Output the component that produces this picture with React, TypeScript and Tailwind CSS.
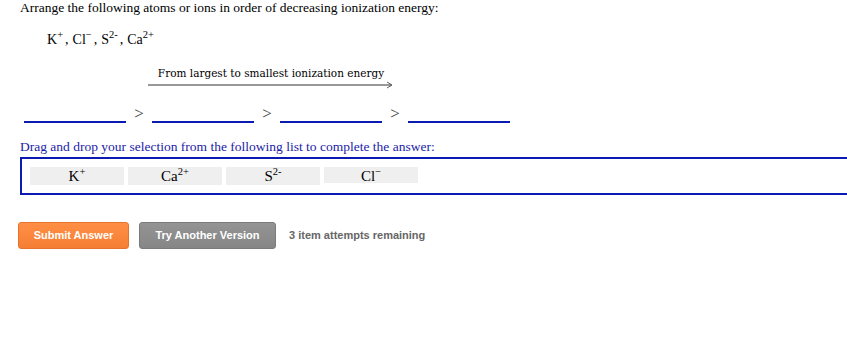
import React from 'react';

const serif = { fontFamily: '"Liberation Serif", "Times New Roman", serif' };
const math = { fontFamily: '"DejaVu Serif", "Liberation Serif", serif' };
const sans = { fontFamily: '"Liberation Sans", Arial, sans-serif' };

const tiles = [
    { base: 'K', sup: '+' },
    { base: 'Ca', sup: '2+' },
    { base: 'S', sup: '2-' },
    { base: 'Cl', sup: '−' },
];

const Sup = ({ children }: { children: React.ReactNode }) => (
    <span className="relative -top-[6px] text-[10.5px]">{children}</span>
);

const Comma = () => <span className="ml-[2px] mr-[4px]">,</span>;

const Blank = () => <div className="w-[102px] h-[2px] bg-[#0a1ab3] mt-[15px]" />;

const Gt = () => (
    <span className="text-[17px] text-[#444] w-[26px] text-center leading-[15px]" style={serif}>
        &gt;
    </span>
);

const App: React.FC = () => {
    return (
        <div className="w-[847px] h-[363px] bg-white overflow-hidden relative">
            <div className="pl-[20px]">
                {/* Question */}
                <p className="text-[13.5px] text-black leading-[16px]" style={serif}>
                    Arrange the following atoms or ions in order of decreasing ionization energy:
                </p>
                <p className="mt-[15px] ml-[27px] text-[14px] text-black leading-[18px]" style={serif}>
                    K<Sup>+</Sup><Comma />Cl<Sup>−</Sup><Comma />S<Sup>2-</Sup><Comma />Ca<Sup>2+</Sup>
                </p>

                {/* Arrow label */}
                <div className="ml-[128px] mt-[16px] w-[246px] flex flex-col items-center">
                    <span className="text-[10.5px] text-black leading-[14px]" style={math}>
                        From largest to smallest ionization energy
                    </span>
                    <svg width="246" height="8" className="mt-[1px]">
                        <line x1="0" y1="4" x2="243" y2="4" stroke="#333" strokeWidth="1" />
                        <path d="M239 1 L244 4 L239 7" fill="none" stroke="#333" strokeWidth="0.8" />
                    </svg>
                </div>

                {/* Answer blanks */}
                <div className="flex items-start mt-[17px] ml-[4px]">
                    <Blank />
                    <Gt />
                    <Blank />
                    <Gt />
                    <Blank />
                    <Gt />
                    <Blank />
                </div>

                {/* Drag list */}
                <p className="mt-[15px] text-[13.5px] text-[#1c1ca8] leading-[18px]" style={serif}>
                    Drag and drop your selection from the following list to complete the answer:
                </p>
                <div className="mt-[1px] w-[840px] h-[38px] border-2 border-[#0a1ab3] border-r-0 flex items-start gap-[4px] pl-[8px] pt-[8px]">
                    {tiles.map((t, i) => (
                        <div
                            key={i}
                            className={`w-[94px] ${i === 3 ? 'h-[16px]' : 'h-[18px]'} bg-[#efefef] flex items-start justify-center text-[15px] text-black leading-[19px]`}
                            style={serif}
                        >
                            <span>
                                {t.base}
                                <Sup>{t.sup}</Sup>
                            </span>
                        </div>
                    ))}
                </div>

                {/* Buttons */}
                <div className="flex items-center mt-[27px] -ml-[2px]">
                    <button className="w-[111px] h-[27px] rounded-[3px] border border-[#e5732d] bg-gradient-to-b from-[#ff8f45] to-[#f57e33] text-white text-[11px] font-bold" style={sans}>
                        Submit Answer
                    </button>
                    <button className="ml-[10px] w-[137px] h-[27px] rounded-[3px] border border-[#7a7a7a] bg-gradient-to-b from-[#949494] to-[#868686] text-white text-[11px] font-bold" style={sans}>
                        Try Another Version
                    </button>
                    <span className="ml-[13px] text-[11px] font-bold text-[#666]" style={sans}>
                        3 item attempts remaining
                    </span>
                </div>
            </div>
        </div>
    );
};

export default App;
